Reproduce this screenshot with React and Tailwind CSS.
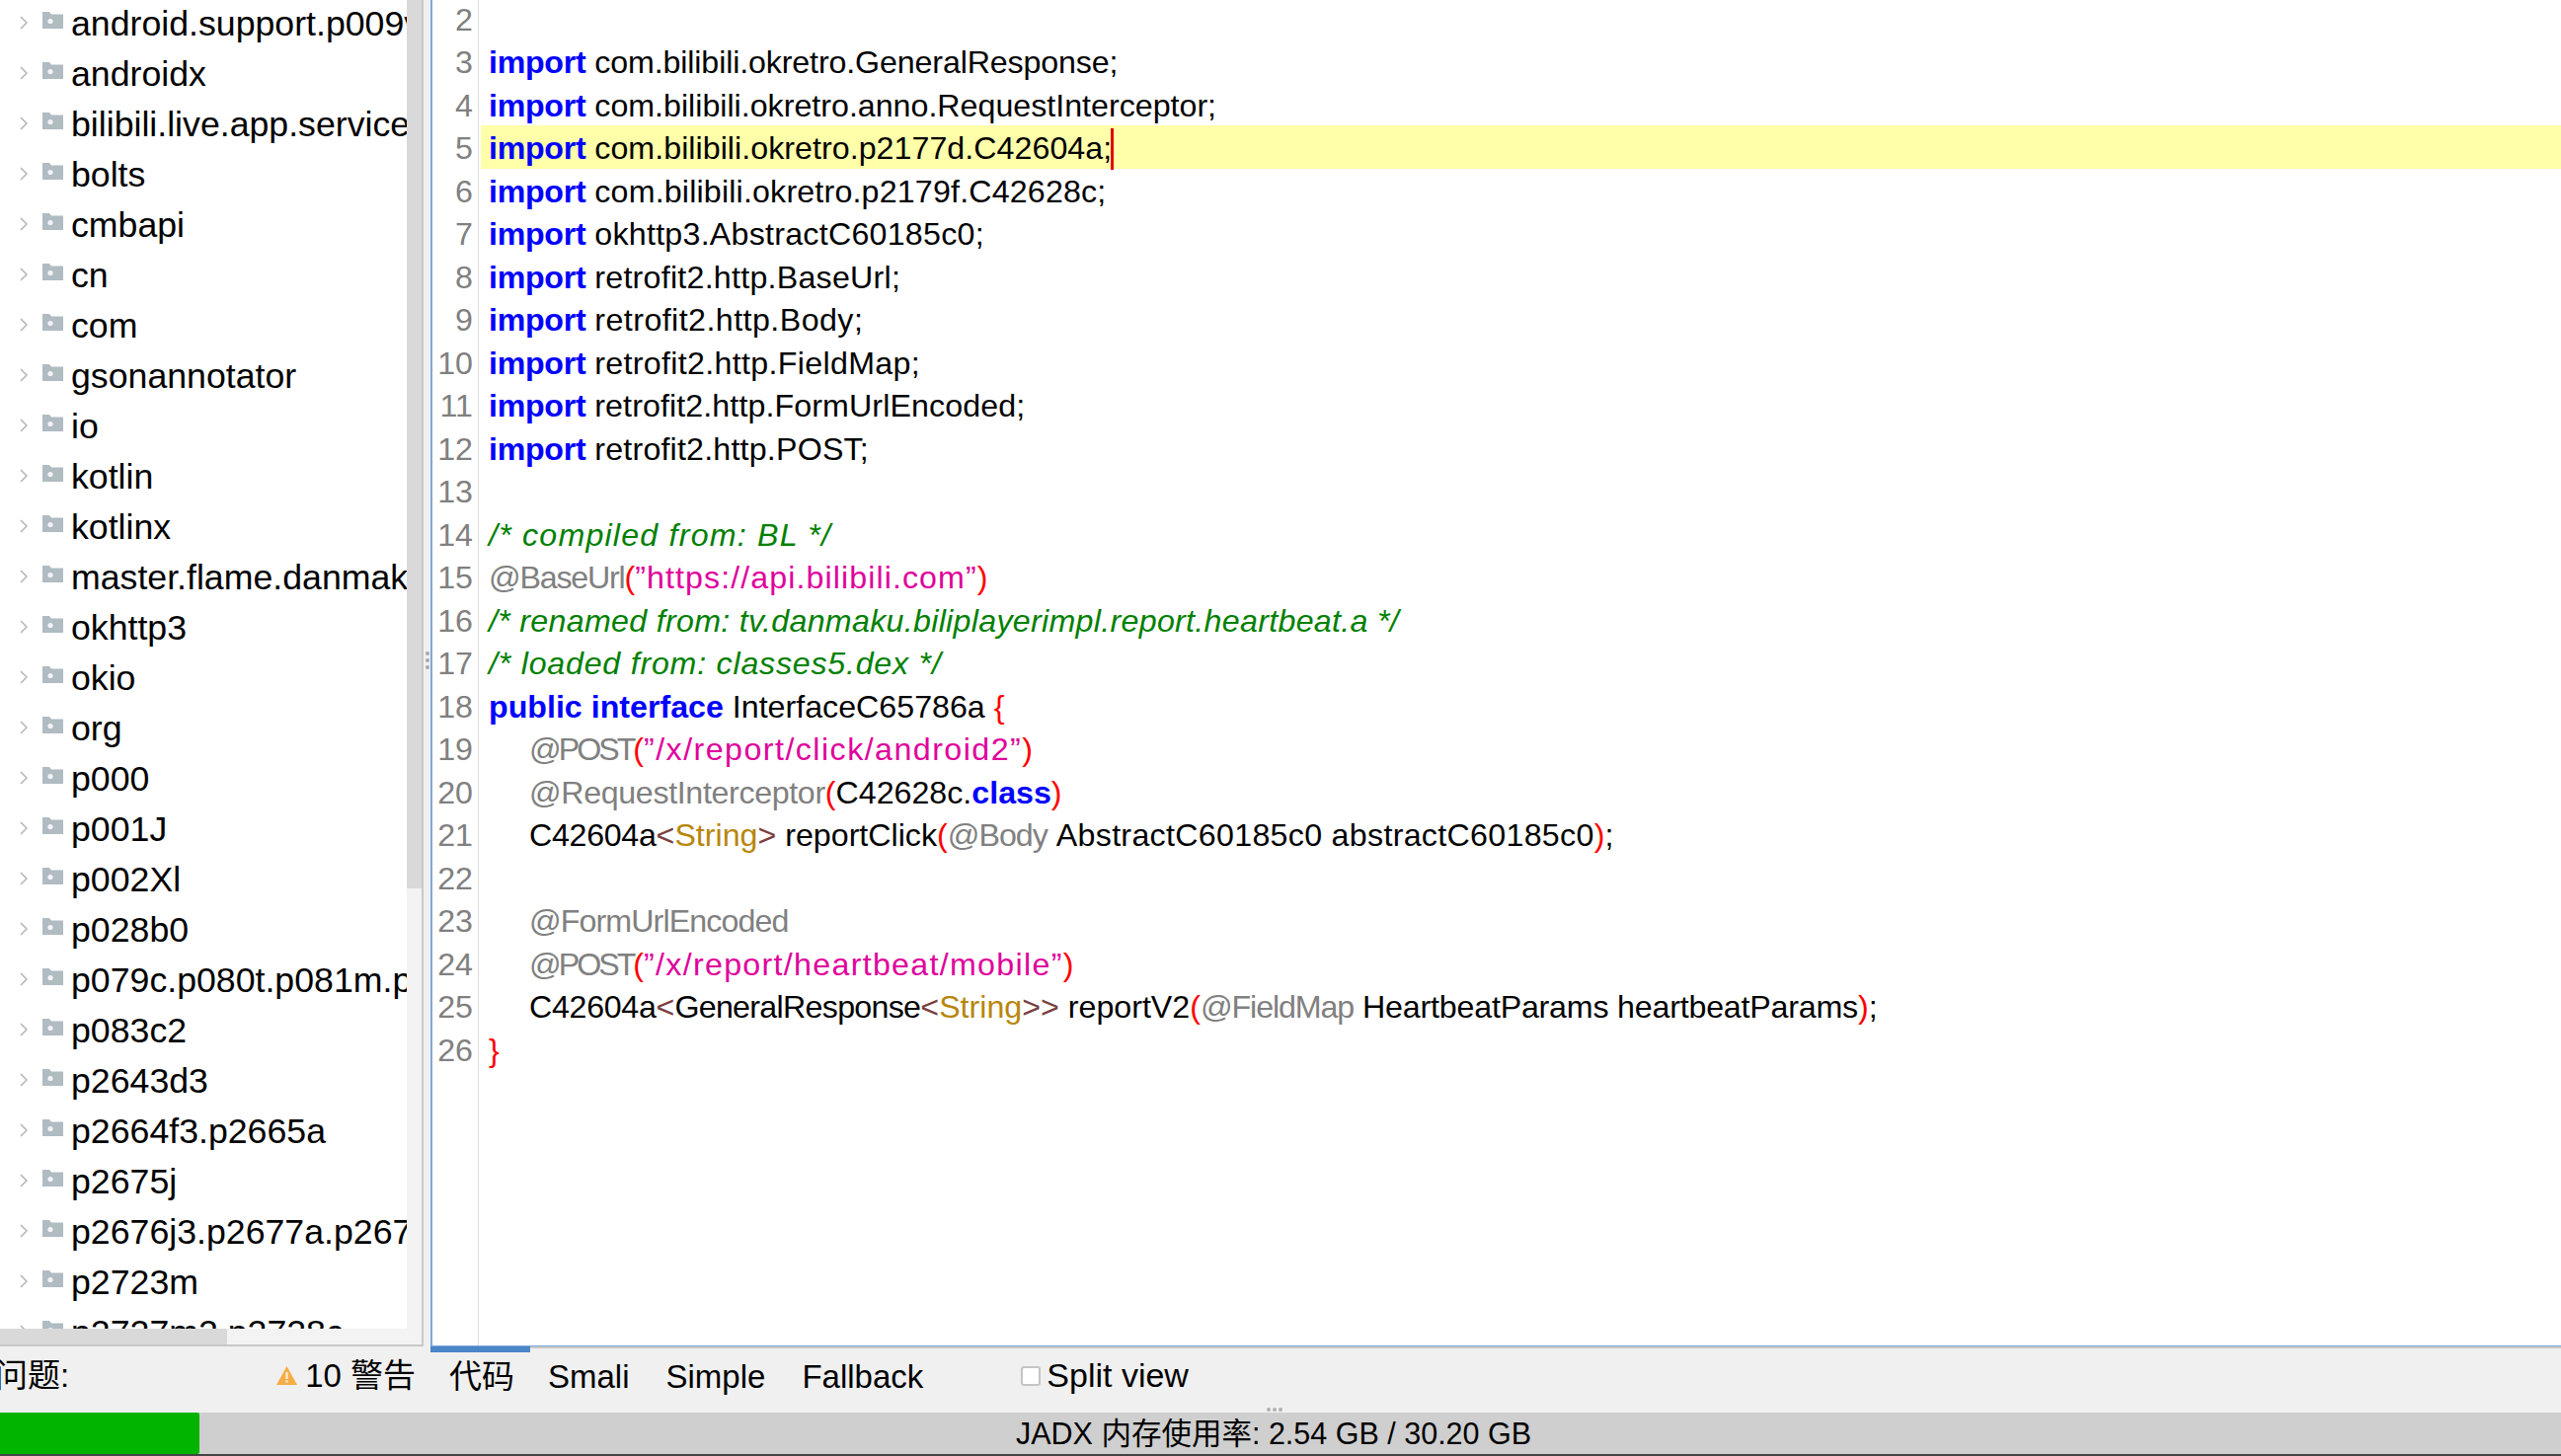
import React from 'react';

const packages = [
  'android.support.p009v4', 'androidx', 'bilibili.live.app.service', 'bolts', 'cmbapi', 'cn', 'com',
  'gsonannotator', 'io', 'kotlin', 'kotlinx', 'master.flame.danmaku', 'okhttp3', 'okio', 'org', 'p000',
  'p001J', 'p002Xl', 'p028b0', 'p079c.p080t.p081m.p082a', 'p083c2', 'p2643d3', 'p2664f3.p2665a', 'p2675j',
  'p2676j3.p2677a.p2678b', 'p2723m', 'p2727m2.p2728c',
];

const Kw = ({ children, className = '' }) => <span className={`font-bold text-[#0000ff] ${className}`}>{children}</span>;
const Ann = ({ children, className = '' }) => <span className={`text-[#808080] ${className}`}>{children}</span>;
const Br = ({ children }) => <span className="text-[#ff0000]">{children}</span>;
const Str = ({ children, className = '' }) => <span className={`text-[#e0009c] ${className}`}>{children}</span>;
const Gen = ({ children }) => <span className="text-[#7a4040]">{children}</span>;
const Typ = ({ children }) => <span className="text-[#b8860b]">{children}</span>;
const Cmt = ({ children, className = '' }) => <span className={`italic text-[#008000] ${className}`}>{children}</span>;

// small tracking per line, the reference font is a bit off from Liberation
const imp = (name, className = '') => (
  <>
    <Kw className="tracking-[-0.3px]">import</Kw> <span className={className}>{name}</span>
  </>
);

const lines = [
  { n: 2 },
  { n: 3, code: imp('com.bilibili.okretro.GeneralResponse;', 'tracking-[-0.13px]') },
  { n: 4, code: imp('com.bilibili.okretro.anno.RequestInterceptor;') },
  {
    n: 5,
    active: true,
    code: (
      <>
        {imp('com.bilibili.okretro.p2177d.C42604a;', 'tracking-[0.04px]')}
        <span className="inline-block w-[3px] h-[42px] -ml-[1px] -translate-y-[2px] bg-[#e00000] align-middle" />
      </>
    ),
  },
  { n: 6, code: imp('com.bilibili.okretro.p2179f.C42628c;', 'tracking-[0.18px]') },
  { n: 7, code: imp('okhttp3.AbstractC60185c0;', 'tracking-[0.25px]') },
  { n: 8, code: imp('retrofit2.http.BaseUrl;', 'tracking-[0.25px]') },
  { n: 9, code: imp('retrofit2.http.Body;', 'tracking-[0.45px]') },
  { n: 10, code: imp('retrofit2.http.FieldMap;', 'tracking-[0.32px]') },
  { n: 11, code: imp('retrofit2.http.FormUrlEncoded;', 'tracking-[0.1px]') },
  { n: 12, code: imp('retrofit2.http.POST;', 'tracking-[0.2px]') },
  { n: 13 },
  { n: 14, code: <Cmt className="tracking-[1.2px]">/* compiled from: BL */</Cmt> },
  {
    n: 15,
    code: (
      <>
        <Ann className="tracking-[-1.2px]">@BaseUrl</Ann><Br>(</Br>
        <Str className="tracking-[1.08px]">”https://api.bilibili.com”</Str><Br>)</Br>
      </>
    ),
  },
  { n: 16, code: <Cmt className="tracking-[0.3px]">/* renamed from: tv.danmaku.biliplayerimpl.report.heartbeat.a */</Cmt> },
  { n: 17, code: <Cmt className="tracking-[0.77px]">/* loaded from: classes5.dex */</Cmt> },
  {
    n: 18,
    code: (
      <>
        <Kw>public interface</Kw> InterfaceC65786a <Br>{'{'}</Br>
      </>
    ),
  },
  {
    n: 19,
    indent: true,
    code: (
      <>
        <Ann className="tracking-[-3px]">@POST</Ann><Br>(</Br>
        <Str className="tracking-[1.46px]">”/x/report/click/android2”</Str><Br>)</Br>
      </>
    ),
  },
  {
    n: 20,
    indent: true,
    code: (
      <>
        <Ann className="tracking-[-0.35px]">@RequestInterceptor</Ann><Br>(</Br>C42628c.<Kw>class</Kw><Br>)</Br>
      </>
    ),
  },
  {
    n: 21,
    indent: true,
    code: (
      <>
        <span className="tracking-[-0.3px]">C42604a</span><Gen>&lt;</Gen><Typ>String</Typ><Gen>&gt;</Gen> reportClick<Br>(</Br><Ann className="tracking-[-1px]">@Body</Ann>{' '}
        <span className="tracking-[0.3px]">AbstractC60185c0 abstractC60185c0</span><Br>)</Br>;
      </>
    ),
  },
  { n: 22 },
  { n: 23, indent: true, code: <Ann className="tracking-[-0.9px]">@FormUrlEncoded</Ann> },
  {
    n: 24,
    indent: true,
    code: (
      <>
        <Ann className="tracking-[-3px]">@POST</Ann><Br>(</Br>
        <Str className="tracking-[1.3px]">”/x/report/heartbeat/mobile”</Str><Br>)</Br>
      </>
    ),
  },
  {
    n: 25,
    indent: true,
    code: (
      <>
        <span className="tracking-[-0.3px]">C42604a</span><Gen>&lt;</Gen><span className="tracking-[-0.7px]">GeneralResponse</span><Gen>&lt;</Gen><Typ>String</Typ><Gen>&gt;&gt;</Gen> reportV2<Br>(</Br>
        <Ann className="tracking-[-1.1px]">@FieldMap</Ann>{' '}
        <span className="tracking-[-0.2px]">HeartbeatParams heartbeatParams</span><Br>)</Br>;
      </>
    ),
  },
  { n: 26, code: <Br>{'}'}</Br> },
];

const FolderIcon = () => (
  <svg width="21" height="17" viewBox="0 0 21 17" className="shrink-0 -mt-[9px]">
    <path d="M0 0h7l2 2.5h12V17H0z" fill="#b0bbc2" />
    <circle cx="8" cy="9.5" r="2.6" fill="#f2f4f5" />
  </svg>
);

const Chevron = () => (
  <svg width="8" height="14" viewBox="0 0 8 14" className="shrink-0 -mt-[4px]">
    <path d="M1 1l6 6-6 6" fill="none" stroke="#b4b4b4" strokeWidth="1.5" />
  </svg>
);

const TreeRow = ({ name }) => (
  <div className="flex items-center h-[51px] shrink-0 pl-[20px] whitespace-nowrap">
    <Chevron />
    <span className="w-[15px] shrink-0" />
    <FolderIcon />
    <span className="ml-[8px] text-[35.7px] text-black">{name}</span>
  </div>
);

const Tree = () => (
  <div className="flex flex-col w-[429px] shrink-0 border-r-2 border-b-2 border-[#c8c8c8] overflow-hidden">
    <div className="flex flex-1 min-h-0">
      <div className="flex-1 min-w-0 overflow-hidden bg-white -mt-[0.5px]">
        {packages.map((name) => <TreeRow key={name} name={name} />)}
      </div>
      <div className="w-[15px] shrink-0 bg-[#f3f3f3]">
        <div className="h-[900px] bg-[#d9d9d9]" />
      </div>
    </div>
    <div className="h-[16px] shrink-0 bg-[#f3f3f3]">
      <div className="w-[230px] h-full bg-[#d9d9d9]" />
    </div>
  </div>
);

const Splitter = () => (
  <div className="w-[7px] shrink-0 flex flex-col items-center justify-center gap-[3px] bg-[#f0f0f0] pb-[26px]">
    <span className="w-[4px] h-[4px] rounded-full bg-[#a8a8a8]" />
    <span className="w-[4px] h-[4px] rounded-full bg-[#a8a8a8]" />
    <span className="w-[4px] h-[4px] rounded-full bg-[#a8a8a8]" />
  </div>
);

const Editor = () => (
  <div className="flex flex-1 min-w-0 bg-white border-l-2 border-b border-[#7fa8d8] overflow-hidden">
    <div className="w-[47px] shrink-0 border-r border-[#dcdcdc] -mt-[3.5px] pr-[5px]">
      {lines.map((l) => (
        <div key={l.n} className="h-[43.5px] leading-[47.5px] text-right text-[32.2px] text-[#808080]">{l.n}</div>
      ))}
    </div>
    <div className="flex-1 min-w-0 -mt-[3.5px] pl-[2px]">
      {lines.map((l) => (
        <div
          key={l.n}
          className={`h-[43.5px] leading-[47.5px] text-[32.2px] text-black whitespace-pre pl-[8px] ${l.active ? 'bg-[#ffffaa]' : ''}`}
        >
          {l.indent ? <span className="inline-block w-[41px]" /> : null}
          {l.code}
        </div>
      ))}
    </div>
  </div>
);

const WarningIcon = () => (
  <svg width="21" height="19" viewBox="0 0 21 19" className="shrink-0">
    <path d="M10.5 0L21 19H0z" fill="#f5ad45" />
    <rect x="9.3" y="6" width="2.4" height="7" fill="#fbeacc" />
    <rect x="9.3" y="14.3" width="2.4" height="2.4" fill="#fbeacc" />
  </svg>
);

const BottomTabs = () => (
  <div className="relative flex h-[67px] shrink-0 bg-[#f0f0f0] text-black text-[33px] whitespace-nowrap">
    <div className="flex items-center w-[441px] shrink-0 -ml-[5px] pr-[15px] pb-[8px]">
      <span className="flex-1">问题:</span>
      <WarningIcon />
      <span className="ml-[8px]">10 警告</span>
    </div>
    <div className="relative flex items-center flex-1 border-t-2 border-[#c8c8c8] pb-[8px]">
      <span className="absolute -top-[2px] left-0 w-[101px] h-[6px] bg-[#4a86c8]" />
      <div className="flex items-center pl-[19px] gap-[37px]">
        <span>代码</span>
        <span className="-ml-[3px]">Smali</span>
        <span>Simple</span>
        <span>Fallback</span>
      </div>
      <label className="flex items-center ml-[99px] -mt-[2px] text-[34px]">
        <span className="w-[20px] h-[20px] rounded-[3px] border-2 border-[#c4c4c4] bg-white" />
        <span className="ml-[6px]">Split view</span>
      </label>
    </div>
    <div className="absolute left-[1283px] bottom-[1px] flex gap-[2px]">
      <span className="w-[4px] h-[4px] rounded-full bg-[#b0b0b0]" />
      <span className="w-[4px] h-[4px] rounded-full bg-[#b0b0b0]" />
      <span className="w-[4px] h-[4px] rounded-full bg-[#b0b0b0]" />
    </div>
  </div>
);

const StatusBar = () => (
  <div className="relative h-[42px] shrink-0 bg-[#cfcfcf]">
    <div className="w-[202px] h-full bg-[#00b400] rounded-r-[2px]" />
    <div className="absolute inset-0 pl-[1029px] pt-[2px] flex items-center text-[30.5px] text-black whitespace-nowrap">
      JADX 内存使用率: 2.54 GB / 30.20 GB
    </div>
  </div>
);

export default function App() {
  return (
    <div className="w-[2594px] h-[1475px] flex flex-col overflow-hidden bg-[#f0f0f0] font-['Liberation_Sans','Noto_Sans_CJK_SC',sans-serif]">
      <div className="flex h-[1364px] shrink-0">
        <Tree />
        <Splitter />
        <Editor />
      </div>
      <BottomTabs />
      <StatusBar />
      <div className="flex-1 bg-[#444444]" />
    </div>
  );
}
